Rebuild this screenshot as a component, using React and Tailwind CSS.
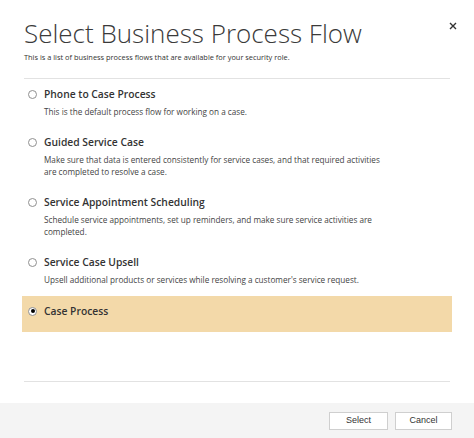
import { useState } from 'react'

const processes = [
  {
    id: 'phone',
    name: 'Phone to Case Process',
    desc: ['This is the default process flow for working on a case.'],
  },
  {
    id: 'guided',
    name: 'Guided Service Case',
    desc: [
      'Make sure that data is entered consistently for service cases, and that required activities',
      'are completed to resolve a case.',
    ],
  },
  {
    id: 'appointment',
    name: 'Service Appointment Scheduling',
    desc: [
      'Schedule service appointments, set up reminders, and make sure service activities are',
      'completed.',
    ],
  },
  {
    id: 'upsell',
    name: 'Service Case Upsell',
    desc: ["Upsell additional products or services while resolving a customer's service request."],
  },
  {
    id: 'case',
    name: 'Case Process',
    desc: [],
  },
]

function Radio({ checked }) {
  return (
    <span className="w-[9px] h-[9px] rounded-full border border-[#8f8f8f] bg-white flex items-center justify-center shrink-0">
      {checked && <span className="w-[4px] h-[4px] rounded-full bg-black"></span>}
    </span>
  )
}

function App() {
  const [selected, setSelected] = useState('case')

  return (
    <div className="w-[474px] h-[438px] bg-white flex flex-col relative font-['Open_Sans','Noto_Sans',sans-serif] text-[#333]">
      <button className="absolute top-[22px] right-[17px] w-[8px] h-[8px]">
        <svg viewBox="0 0 8 8" className="w-[8px] h-[8px]">
          <path d="M1 1 L7 7 M7 1 L1 7" stroke="#333" strokeWidth="1.4" />
        </svg>
      </button>

      <div className="px-[24px] pt-[15px]">
        <h1 className="text-[26px] leading-[36px] font-light text-[#3a3a3a]">Select Business Process Flow</h1>
        <p className="text-[7.4px] leading-[12px] text-[#333]">This is a list of business process flows that are available for your security role.</p>
      </div>

      <div className="mx-[24px] mt-[15px] h-px bg-[#e2e2e2]"></div>

      <div className="mx-[22px] mt-[8px] flex flex-col">
        {processes.map((p, i) => {
          const isSel = selected === p.id
          return (
            <div
              key={p.id}
              onClick={() => setSelected(p.id)}
              className={
                isSel
                  ? 'bg-[#f3d9a9] pl-[6px] pt-[8px] pb-[14px] mt-[10px]'
                  : i === 0
                  ? 'pl-[6px]'
                  : 'pl-[6px] mt-[17px]'
              }
            >
              <div className="flex items-center gap-[7px] h-[14px]">
                <Radio checked={isSel} />
                <span className="text-[10.3px] leading-[14px] font-semibold text-[#333]">{p.name}</span>
              </div>
              {p.desc.length > 0 && (
                <div className="mt-[5px] pl-[16px] text-[8.2px] leading-[12px] text-[#444]">
                  {p.desc.map((line) => (
                    <div key={line}>{line}</div>
                  ))}
                </div>
              )}
            </div>
          )
        })}
      </div>

      <div className="flex-1"></div>

      <div className="mx-[24px] h-px bg-[#e2e2e2] mb-[21px]"></div>

      <div className="h-[35px] bg-[#f4f4f4] flex justify-end items-start gap-[7px] pr-[22px] pt-[9px] font-['Liberation_Sans',Arial,sans-serif]">
        <button className="w-[59px] h-[18px] bg-white border border-[#cfcfcf] text-[9px] text-[#333]">Select</button>
        <button className="w-[57px] h-[18px] bg-white border border-[#cfcfcf] text-[9px] text-[#333]">Cancel</button>
      </div>
    </div>
  )
}

export default App
